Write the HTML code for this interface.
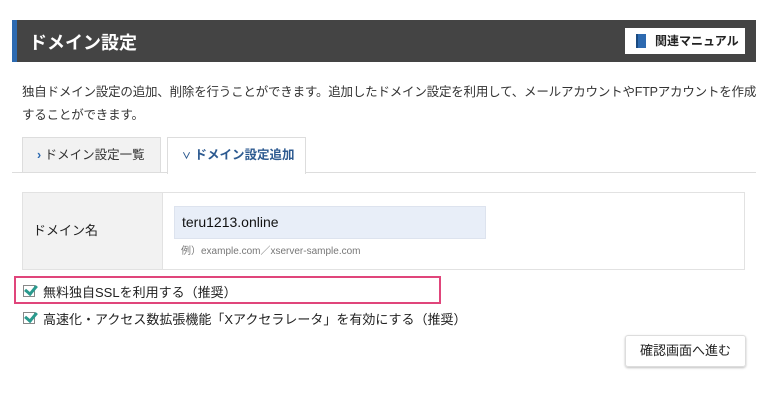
<!DOCTYPE html>
<html><head><meta charset="utf-8"><style>
*{margin:0;padding:0;box-sizing:border-box}
body{width:768px;height:408px;background:#fff;font-family:"Liberation Sans","Noto Sans CJK JP",sans-serif;color:#222;position:relative;overflow:hidden}
.abs{position:absolute}
.hdr{left:12px;top:20px;width:744px;height:42px;background:#444;border-left:5px solid #2d6ab0}
.hdr h1{position:absolute;left:12px;top:9px;font-size:18px;color:#fff;font-weight:bold}
.man{left:625px;top:28px;width:120px;height:26px;background:#fff;font-size:12px;font-weight:bold;line-height:26px;padding-left:30px}
.man i{position:absolute;left:11px;top:6px;width:10px;height:14px;background:#2d6ab0;border-left:2px solid #1a4a80}
.p{left:22px;font-size:12.5px;color:#333;white-space:nowrap;letter-spacing:-0.2px}
.tab{top:137px;height:36px;font-size:12.5px;line-height:35px;padding-left:14px;border:1px solid #ddd;border-bottom:none}
.line{left:12px;top:172px;width:744px;height:1px;background:#ddd}
.tbl{left:22px;top:192px;width:723px;height:78px;border:1px solid #e2e2e2}
.lab{left:0;top:0;width:140px;height:76px;background:#f2f2f2;border-right:1px solid #e2e2e2;font-size:13px;line-height:76px;padding-left:10px}
.inp{left:151px;top:13px;width:312px;height:33px;background:#e8eef8;border:1px solid #dde3ee;font-size:14px;line-height:31px;padding-left:7px;color:#111}
.hint{left:158px;top:49px;font-size:10px;color:#777}
.cb{width:12px;height:12px;border:1px solid #888;background:#fff}
.cb:after{content:"";position:absolute;left:3px;top:-3px;width:5px;height:9px;border:solid #2a9a8e;border-width:0 3px 3px 0;transform:rotate(40deg)}
.lbl{font-size:13px;color:#222}
.btn{left:625px;top:335px;width:121px;height:32px;border:1px solid #ddd;border-radius:3px;box-shadow:0 1px 2px rgba(0,0,0,.25);font-size:13px;line-height:30px;text-align:center}
</style></head><body>
<div class="abs hdr"><h1>ドメイン設定</h1></div>
<div class="abs man"><i></i>関連マニュアル</div>
<div class="abs p" style="top:81px">独自ドメイン設定の追加、削除を行うことができます。追加したドメイン設定を利用して、メールアカウントやFTPアカウントを作成</div>
<div class="abs p" style="top:104px">することができます。</div>
<div class="abs tab" style="left:22px;width:139px;background:#f2f2f2;color:#333"><b style="color:#2d6ab0">›</b> ドメイン設定一覧</div>
<div class="abs tab" style="left:167px;width:139px;background:#fff;color:#2d5a90;font-weight:bold;height:37px;z-index:2"><span style="font-size:9px">∨</span> ドメイン設定追加</div>
<div class="abs line"></div>
<div class="abs tbl"><div class="abs lab">ドメイン名</div><div class="abs inp">teru1213.online</div><div class="abs hint">例）example.com／xserver-sample.com</div></div>
<div class="abs" style="left:14px;top:276px;width:427px;height:28px;border:2px solid #e0457b"></div>
<div class="abs cb" style="left:23px;top:285px"></div>
<div class="abs lbl" style="left:43px;top:282px">無料独自SSLを利用する（推奨）</div>
<div class="abs cb" style="left:23px;top:312px"></div>
<div class="abs lbl" style="left:43px;top:309px">高速化・アクセス数拡張機能「Xアクセラレータ」を有効にする（推奨）</div>
<div class="abs btn">確認画面へ進む</div>
</body></html>
